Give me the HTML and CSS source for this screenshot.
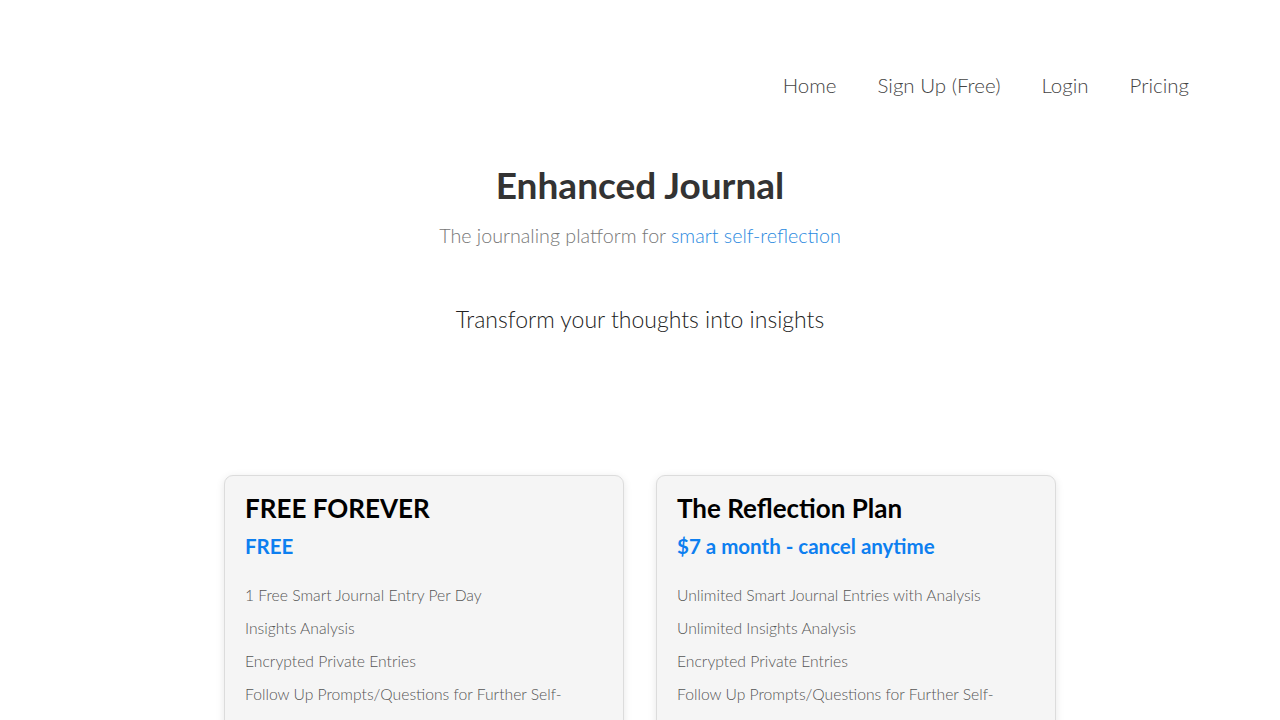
FILE: index.html
```html
<!DOCTYPE html>
<html lang="en">
<head>
<meta charset="utf-8">
<title>Enhanced Journal</title>
<link rel="stylesheet" href="styles.css">
</head>
<body>
<header class="topbar">
  <nav class="nav">
    <a class="nav-link" href="#">Home</a>
    <a class="nav-link" href="#">Sign Up (Free)</a>
    <a class="nav-link" href="#">Login</a>
    <a class="nav-link" href="#">Pricing</a>
  </nav>
</header>
<main>
  <section class="hero">
    <h1 class="title">Enhanced Journal</h1>
    <p class="subtitle">The journaling platform for <span class="accent">smart self-reflection</span></p>
    <p class="tagline">Transform your thoughts into insights</p>
  </section>
  <section class="plans">
    <div class="card">
      <h2 class="plan-name">FREE FOREVER</h2>
      <h3 class="plan-price">FREE</h3>
      <ul class="features">
        <li>1 Free Smart Journal Entry Per Day</li>
        <li>Insights Analysis</li>
        <li>Encrypted Private Entries</li>
        <li>Follow Up Prompts/Questions for Further Self-Reflection</li>
      </ul>
    </div>
    <div class="card">
      <h2 class="plan-name">The Reflection Plan</h2>
      <h3 class="plan-price">$7 a month - cancel anytime</h3>
      <ul class="features">
        <li>Unlimited Smart Journal Entries with Analysis</li>
        <li>Unlimited Insights Analysis</li>
        <li>Encrypted Private Entries</li>
        <li>Follow Up Prompts/Questions for Further Self-Reflection</li>
      </ul>
    </div>
  </section>
</main>
</body>
</html>
```

FILE: styles.css
```css
* { box-sizing: border-box; }
body {
  margin: 0;
  font-family: "Lato", "Open Sans", sans-serif;
  font-weight: 300;
  color: #333;
  background: #fff;
}
.topbar {
  display: flex;
  justify-content: flex-end;
  padding: 72px 91px 0 0;
}
.nav {
  display: flex;
  gap: 41px;
}
.nav-link {
  font-size: 20.5px;
  line-height: 26px;
  color: #444;
  text-decoration: none;
}
.hero {
  text-align: center;
  padding-top: 63px;
}
.title {
  margin: 0;
  font-size: 37px;
  line-height: 48px;
  font-weight: 700;
  color: #333;
}
.subtitle {
  margin: 14px 0 0;
  font-size: 19.7px;
  line-height: 26px;
  color: #777;
}
.accent { color: #2b8ae0; }
.tagline {
  margin: 55px 0 0;
  font-size: 23px;
  line-height: 30px;
  color: #222;
}
.plans {
  display: flex;
  justify-content: center;
  gap: 32px;
  margin-top: 141px;
}
.card {
  width: 400px;
  background: #f5f5f5;
  border: 1px solid #dcdcdc;
  border-radius: 9px;
  box-shadow: 0 2px 8px rgba(0,0,0,0.1);
  padding: 16px 20px 20px;
}
.plan-name {
  margin: 0;
  font-size: 26px;
  line-height: 32px;
  font-weight: 700;
  color: #000;
}
.plan-price {
  margin: 7px 0 0;
  font-size: 20.5px;
  line-height: 30px;
  font-weight: 700;
  color: #0d7ff0;
}
.features {
  list-style: none;
  margin: 18px 0 0;
  padding: 0;
}
.features li {
  font-size: 15.7px;
  line-height: 33px;
  color: #555;
}
```
